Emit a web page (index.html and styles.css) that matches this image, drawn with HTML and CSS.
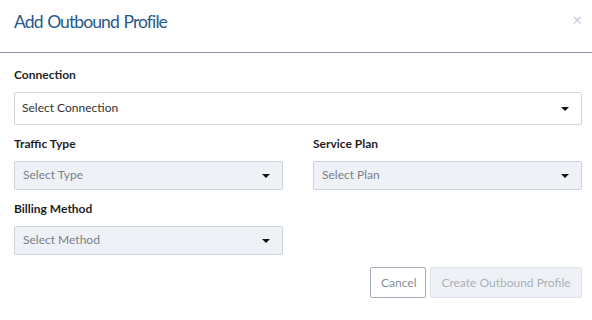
FILE: index.html
```html
<!DOCTYPE html>
<html>
<head>
<meta charset="utf-8">
<link rel="stylesheet" href="styles.css">
</head>
<body>
<div class="modal">
  <div class="header">
    <h1 class="title">Add Outbound Profile</h1>
    <span class="close">&times;</span>
  </div>
  <div class="content">
    <div class="field">
      <label class="label">Connection</label>
      <div class="select select-lg"><span>Select Connection</span><span class="caret"></span></div>
    </div>
    <div class="row">
      <div class="field">
        <label class="label">Traffic Type</label>
        <div class="select disabled"><span>Select Type</span><span class="caret"></span></div>
      </div>
      <div class="field">
        <label class="label">Service Plan</label>
        <div class="select disabled"><span>Select Plan</span><span class="caret"></span></div>
      </div>
    </div>
    <div class="row">
      <div class="field">
        <label class="label">Billing Method</label>
        <div class="select disabled"><span>Select Method</span><span class="caret"></span></div>
      </div>
      <div></div>
    </div>
    <div class="actions">
      <button class="btn btn-cancel">Cancel</button>
      <button class="btn btn-create">Create Outbound Profile</button>
    </div>
  </div>
</div>
</body>
</html>
```
FILE: styles.css
```css
html, body {
  margin: 0;
  padding: 0;
  background: #fff;
}
body {
  font-family: Lato, "Open Sans", sans-serif;
  color: #222;
}
.modal {
  width: 592px;
  height: 320px;
  background: #fff;
}
.header {
  height: 42px;
  padding: 10px 14px 0 14px;
  border-bottom: 1px solid #8a95a5;
  display: flex;
  justify-content: space-between;
  align-items: flex-start;
}
.title {
  margin: 0;
  font-size: 17.5px;
  line-height: 24px;
  font-weight: 400;
  letter-spacing: -0.9px;
  word-spacing: 1px;
  color: #27598a;
}
.close {
  color: #c8ccd2;
  font-size: 17px;
  line-height: 16px;
  margin-top: 2px;
  margin-right: -4px;
}
.content {
  padding: 14px 10px 0 14px;
}
.field {
  display: flex;
  flex-direction: column;
}
.label {
  font-size: 12px;
  line-height: 16px;
  font-weight: 700;
  color: #1f1f1f;
  margin-bottom: 9px;
}
.select {
  box-sizing: border-box;
  height: 29px;
  border: 1px solid #cdd4de;
  border-radius: 2px;
  padding: 0 12px 0 8px;
  display: flex;
  align-items: center;
  justify-content: space-between;
  font-size: 12px;
  line-height: 14px;
  color: #333;
  background: #fff;
}
.select > span:first-child {
  margin-top: -1px;
}
.select-lg {
  height: 33px;
  padding-left: 7px;
}
.select.disabled {
  background: #eef2f7;
  color: #7b8088;
}
.caret {
  width: 0;
  height: 0;
  border-left: 4px solid transparent;
  border-right: 4px solid transparent;
  border-top: 4px solid #111;
}
.row {
  display: grid;
  grid-template-columns: 269px 269px;
  column-gap: 30px;
  margin-top: 11px;
}
.actions {
  display: flex;
  justify-content: flex-end;
  gap: 4px;
  margin-top: 12px;
}
.btn {
  box-sizing: border-box;
  height: 31px;
  font-family: Lato, "Open Sans", sans-serif;
  font-size: 12px;
  border-radius: 2px;
  padding: 0 10px;
}
.btn-cancel {
  width: 56px;
  background: #fff;
  border: 1px solid #a3acb9;
  color: #858d99;
}
.btn-create {
  width: 152px;
  background: #eef2f7;
  border: 1px solid #dde3ea;
  color: #a9b0ba;
}
```
